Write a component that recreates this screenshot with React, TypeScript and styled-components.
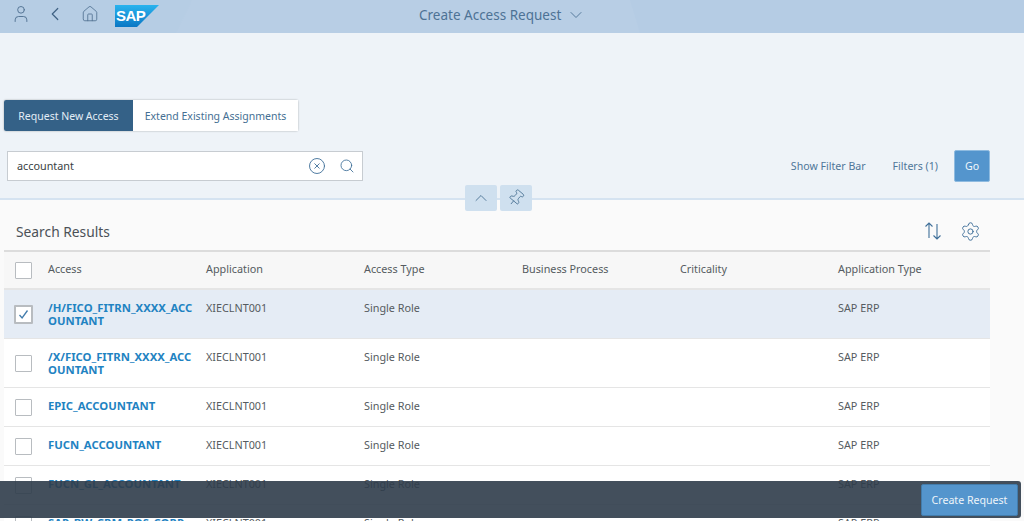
import React, {FC} from 'react';
import styled, {createGlobalStyle} from 'styled-components';
import {ChevronDown, ChevronLeft, ChevronUp, CircleX, House, Pin, Search, Settings, User} from 'lucide-react';

const GlobalStyle = createGlobalStyle`
  *, *::before, *::after {
    margin: 0;
    padding: 0;
    box-sizing: border-box;
  }
  html, body {
    width: 100%;
    height: 100%;
    overflow: hidden;
  }
  body {
    font-family: "Noto Sans", "Open Sans", "Liberation Sans", sans-serif;
    background: #fafafa;
    color: #32363a;
  }
  #root {
    height: 100%;
  }
`;

const Page = styled.div`
  position: relative;
  width: 1024px;
  height: 521px;
  overflow: hidden;
  display: flex;
  flex-direction: column;
`;

const Shell = styled.header`
  position: relative;
  flex: 0 0 33px;
  display: flex;
  align-items: center;
  padding: 0 0 5px 11px;
  background: #b8cee5;
  overflow: hidden;
`;

const ShellBackdrop = styled.svg`
  position: absolute;
  inset: 0;
`;

const ShellIcon = styled.span<{$w: number}>`
  position: relative;
  width: ${p => p.$w}px;
  display: flex;
  color: #4e6f8f;
`;

const LogoSlot = styled.span`
  position: relative;
  display: flex;
  margin-top: 3px;
`;

const ShellTitle = styled.div`
  position: absolute;
  left: 419px;
  top: 5px;
  display: flex;
  align-items: center;
  gap: 5px;
  font-size: 13.5px;
  line-height: 18px;
  color: #4d7295;
`;

const FilterArea = styled.section`
  flex: 0 0 167px;
  background: #eef3f8;
  border-bottom: 2px solid #d5e3f1;
  padding: 67px 34px 0 4px;
  display: flex;
  flex-direction: column;
  align-items: flex-start;
  gap: 19px;
`;

const Segmented = styled.div`
  display: flex;
  height: 31px;
  border-radius: 2px;
  background: #fff;
  box-shadow: 0 0 2px rgba(0, 0, 0, .35);
`;

const Segment = styled.div<{$active?: boolean}>`
  display: flex;
  align-items: center;
  justify-content: center;
  width: ${p => p.$active ? 129 : 165}px;
  font-size: 10.5px;
  color: ${p => p.$active ? '#e3edf6' : '#456f93'};
  background: ${p => p.$active ? '#346187' : '#fff'};
  border-radius: 2px 0 0 2px;
`;

const SearchRow = styled.div`
  align-self: stretch;
  display: flex;
  align-items: center;
  justify-content: space-between;
  padding-left: 3px;
`;

const SearchBox = styled.div`
  width: 356px;
  height: 30px;
  background: #fff;
  border: 1px solid #c7ccd1;
  display: flex;
  align-items: center;
  padding: 0 7px 0 9px;
  font-size: 10.8px;
  color: #3a3f44;
`;

const SearchValue = styled.span`
  flex: 1;
  margin-top: -1px;
`;

const SearchIcons = styled.span`
  display: flex;
  align-items: center;
  gap: 13px;
  color: #3f6f99;
`;

const FilterActions = styled.div`
  display: flex;
  align-items: center;
`;

const FilterLink = styled.span<{$gap: number}>`
  font-size: 10.6px;
  color: #4f7699;
  margin-right: ${p => p.$gap}px;
`;

const GoButton = styled.button`
  width: 36px;
  height: 32px;
  background: #5495cd;
  border: 1px solid #8fbbe0;
  border-radius: 2px;
  color: #f2f7fb;
  font: inherit;
  font-size: 10.6px;
`;

const CollapseBar = styled.div`
  position: absolute;
  left: 465px;
  top: 185px;
  display: flex;
  gap: 3px;
`;

const CollapseButton = styled.div`
  width: 32px;
  height: 26px;
  border-radius: 2px;
  background: #cfe0ef;
  color: #4c7395;
  display: flex;
  align-items: center;
  justify-content: center;
`;

const Results = styled.section`
  flex: 1;
  padding: 0 34px 0 4px;
  background: #fafafa;
`;

const ResultsHead = styled.div`
  height: 50px;
  display: flex;
  align-items: center;
  justify-content: space-between;
  padding: 12px 9px 0 12px;
`;

const ResultsTitle = styled.h2`
  font-size: 13.8px;
  font-weight: 400;
  color: #4b5157;
`;

const ResultsTools = styled.div`
  display: flex;
  align-items: center;
  gap: 17px;
  color: #3f6f99;
`;

const Row = styled.div<{$h: number; $bg: string; $head?: boolean}>`
  display: grid;
  grid-template-columns: 44px repeat(5, 158px) 1fr;
  height: ${p => p.$h}px;
  background: ${p => p.$bg};
  border-bottom: ${p => p.$head ? 2 : 1}px solid #e5e5e5;
  border-top: ${p => p.$head ? '2px solid #dcdcdc' : 'none'};
  align-items: ${p => p.$head ? 'center' : 'start'};
  font-size: 10.8px;
  line-height: 13px;
  color: #555b60;
`;

const CheckCell = styled.div`
  align-self: center;
  padding-left: 11px;
`;

const CheckBox = styled.span<{$checked?: boolean}>`
  display: flex;
  align-items: center;
  justify-content: center;
  width: ${p => p.$checked ? 19 : 17}px;
  height: ${p => p.$checked ? 19 : 17}px;
  margin-left: ${p => p.$checked ? -1 : 0}px;
  background: #fff;
  border: ${p => p.$checked ? 2 : 1}px solid #b8bcc0;
  border-radius: 1px;
  color: #427cac;
`;

const Cell = styled.div<{$head?: boolean}>`
  padding-top: ${p => p.$head ? 0 : 11}px;
  margin-top: ${p => p.$head ? -3 : 0}px;
`;

const AccessCell = styled.a`
  display: block;
  padding-top: 11px;
  width: 148px;
  font-size: 11.3px;
  font-weight: 700;
  color: #1f83c2;
  word-break: break-all;
`;

const FooterBar = styled.footer`
  position: absolute;
  left: 0;
  right: 3px;
  top: 481px;
  height: 37px;
  background: rgba(47, 60, 74, .9);
  border-radius: 0 3px 3px 0;
  display: flex;
  align-items: center;
  justify-content: flex-end;
  padding-right: 3px;
`;

const CreateButton = styled.button`
  width: 97px;
  height: 32px;
  background: #5495cd;
  border: 1px solid #427cac;
  border-radius: 2px;
  color: #eef4f9;
  font: inherit;
  font-size: 10.6px;
`;

const SapLogo: FC = () => (
    <svg width="44" height="22" viewBox="0 0 44 22">
        <defs>
            <linearGradient id="sapBlue" x1="0" y1="0" x2="0" y2="1">
                <stop offset="0" stopColor="#29b3ee"/>
                <stop offset="1" stopColor="#0a77c4"/>
            </linearGradient>
        </defs>
        <polygon points="0,0 44,0 22,22 0,22" fill="url(#sapBlue)"/>
        <text x="1" y="15.5" fill="#fff" fontFamily="Liberation Sans" fontSize="15" fontWeight="700" letterSpacing="-.6">SAP</text>
    </svg>
);

// up and down arrows side by side, lucide has only the joined form
const SortIcon: FC = () => (
    <svg width="20" height="20" viewBox="0 0 20 20" fill="none" stroke="currentColor" strokeWidth="1.1">
        <path d="M6 17V2M2.5 5.5L6 2l3.5 3.5"/>
        <path d="M14 3v15M10.5 14.5L14 18l3.5-3.5"/>
    </svg>
);

type Item = {name: string; h: number; checked?: boolean};

const items: Item[] = [
    {name: '/H/FICO_FITRN_XXXX_ACCOUNTANT', h: 49, checked: true},
    {name: '/X/FICO_FITRN_XXXX_ACCOUNTANT', h: 49},
    {name: 'EPIC_ACCOUNTANT', h: 39},
    {name: 'FUCN_ACCOUNTANT', h: 39},
    {name: 'FUCN_GL_ACCOUNTANT', h: 39},
    {name: 'SAP_BW_CRM_POS_CORP', h: 39},
];

const columns = ['Application', 'Access Type', 'Business Process', 'Criticality', 'Application Type'];

const App: FC = () => {
    return (
        <Page>
            <GlobalStyle/>
            <Shell>
                <ShellBackdrop width="1024" height="33">
                    <path d="M0 0H192L176 33H0Z" fill="#b6cde4"/>
                    <path d="M630 0H1024V33H640Z" fill="#b5cce4"/>
                </ShellBackdrop>
                <ShellIcon $w={33}><User size={20} strokeWidth={1.1}/></ShellIcon>
                <ShellIcon $w={37}><ChevronLeft size={22} strokeWidth={1.3} color="#3f6284"/></ShellIcon>
                <ShellIcon $w={34}><House size={18} strokeWidth={1.1}/></ShellIcon>
                <LogoSlot><SapLogo/></LogoSlot>
                <ShellTitle>
                    Create Access Request
                    <ChevronDown size={20} strokeWidth={1.1}/>
                </ShellTitle>
            </Shell>
            <FilterArea>
                <Segmented>
                    <Segment $active>Request New Access</Segment>
                    <Segment>Extend Existing Assignments</Segment>
                </Segmented>
                <SearchRow>
                    <SearchBox>
                        <SearchValue>accountant</SearchValue>
                        <SearchIcons>
                            <CircleX size={18} strokeWidth={1.2}/>
                            <Search size={16} strokeWidth={1.3}/>
                        </SearchIcons>
                    </SearchBox>
                    <FilterActions>
                        <FilterLink $gap={27}>Show Filter Bar</FilterLink>
                        <FilterLink $gap={16}>Filters (1)</FilterLink>
                        <GoButton>Go</GoButton>
                    </FilterActions>
                </SearchRow>
            </FilterArea>
            <CollapseBar>
                <CollapseButton><ChevronUp size={20} strokeWidth={1.1}/></CollapseButton>
                <CollapseButton><Pin size={18} strokeWidth={1.1} style={{transform: 'rotate(40deg)'}}/></CollapseButton>
            </CollapseBar>
            <Results>
                <ResultsHead>
                    <ResultsTitle>Search Results</ResultsTitle>
                    <ResultsTools>
                        <SortIcon/>
                        <Settings size={21} strokeWidth={1.1}/>
                    </ResultsTools>
                </ResultsHead>
                <Row $h={40} $bg="#f7f7f7" $head>
                    <CheckCell><CheckBox/></CheckCell>
                    <Cell $head>Access</Cell>
                    {columns.map(c => <Cell $head key={c}>{c}</Cell>)}
                </Row>
                {items.map(item => (
                    <Row key={item.name} $h={item.h} $bg={item.checked ? '#e5ecf5' : '#fff'}>
                        <CheckCell>
                            <CheckBox $checked={item.checked}>
                                {item.checked && (
                                    <svg width="11" height="11" viewBox="0 0 11 11" fill="none" stroke="currentColor" strokeWidth="1.3">
                                        <path d="M1.5 6l2.6 3L9.5 1.5"/>
                                    </svg>
                                )}
                            </CheckBox>
                        </CheckCell>
                        <AccessCell>{item.name}</AccessCell>
                        <Cell>XIECLNT001</Cell>
                        <Cell>Single Role</Cell>
                        <Cell/>
                        <Cell/>
                        <Cell>SAP ERP</Cell>
                    </Row>
                ))}
            </Results>
            <FooterBar>
                <CreateButton>Create Request</CreateButton>
            </FooterBar>
        </Page>
    );
};

export default App;
